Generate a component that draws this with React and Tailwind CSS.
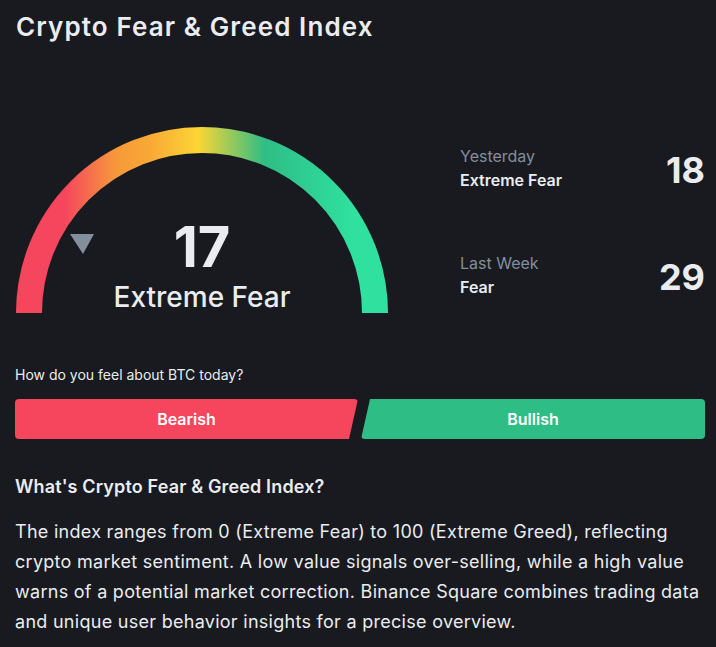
import React from 'react';

const Gauge = () => (
    <div className="relative w-[372px] h-[186px] shrink-0 ml-[1px]">
        <svg width="372" height="186" viewBox="0 0 372 186" className="absolute inset-0">
            <defs>
                <linearGradient id="fg" gradientUnits="userSpaceOnUse" x1="0" y1="0" x2="372" y2="0">
                    <stop offset="0" stopColor="#f6465d" />
                    <stop offset="0.13" stopColor="#f6465d" />
                    <stop offset="0.27" stopColor="#f7993a" />
                    <stop offset="0.36" stopColor="#f8a935" />
                    <stop offset="0.49" stopColor="#fcd535" />
                    <stop offset="0.67" stopColor="#2ebd85" />
                    <stop offset="0.9" stopColor="#2fe09f" />
                    <stop offset="1" stopColor="#2fe09f" />
                </linearGradient>
            </defs>
            <path d="M 13 186 A 173 173 0 0 1 359 186" fill="none" stroke="url(#fg)" strokeWidth="26" />
            <polygon points="54,107 78,107 67,127" fill="#848e9c" />
        </svg>
        <div className="absolute left-0 right-0 top-[92px] text-center text-[56px] leading-none font-bold text-[#eaecef]">17</div>
        <div className="absolute left-0 right-0 top-[156px] text-center text-[28px] leading-none font-medium text-[#eaecef]">Extreme Fear</div>
    </div>
);

const Stat = ({ label, value, num, className }) => (
    <div className={`flex justify-between ${className}`}>
        <div>
            <div className="text-[16px] leading-6 text-[#848e9c]">{label}</div>
            <div className="text-[16px] leading-6 font-semibold text-[#eaecef]">{value}</div>
        </div>
        <div className="text-[36px] leading-[36px] font-bold text-[#eaecef] mt-[8px]">{num}</div>
    </div>
);

export default function App() {
    return (
        <div className="w-[716px] h-[647px] overflow-hidden bg-[#181a20] pl-[15px] pr-[11px] text-[#eaecef]" style={{ fontFamily: 'Inter, sans-serif' }}>
            <h1 className="pt-[11px] text-[26px] leading-8 font-semibold tracking-[1.1px] ml-[1px]">Crypto Fear &amp; Greed Index</h1>

            <div className="flex mt-[84px]">
                <Gauge />
                <div className="ml-auto w-[245px] pt-[17px]">
                    <Stat label="Yesterday" value="Extreme Fear" num="18" />
                    <Stat label="Last Week" value="Fear" num="29" className="mt-[59px]" />
                </div>
            </div>

            <p className="mt-[52px] text-[14px] leading-5">How do you feel about BTC today?</p>
            <div className="flex mt-[14px] h-[40px] gap-[3px] text-white text-[16px] font-semibold">
                <button className="w-[343px] rounded-[4px] bg-[#f6465d] flex items-center justify-center [clip-path:polygon(0_0,100%_0,calc(100%-9px)_100%,0_100%)]">Bearish</button>
                <button className="flex-1 rounded-[4px] bg-[#2ebd85] flex items-center justify-center [clip-path:polygon(9px_0,100%_0,100%_100%,0_100%)]">Bullish</button>
            </div>
            <h2 className="mt-[36px] text-[18px] leading-6 font-semibold tracking-[0.15px]">What's Crypto Fear &amp; Greed Index?</h2>
            <p className="mt-[18px] text-[18px] leading-[30px] tracking-[0.28px] whitespace-nowrap">
                The index ranges from 0 (Extreme Fear) to 100 (Extreme Greed), reflecting<br />
                crypto market sentiment. A low value signals over-selling, while a high value<br />
                warns of a potential market correction. Binance Square combines trading data<br />
                and unique user behavior insights for a precise overview.
            </p>
        </div>
    );
}
